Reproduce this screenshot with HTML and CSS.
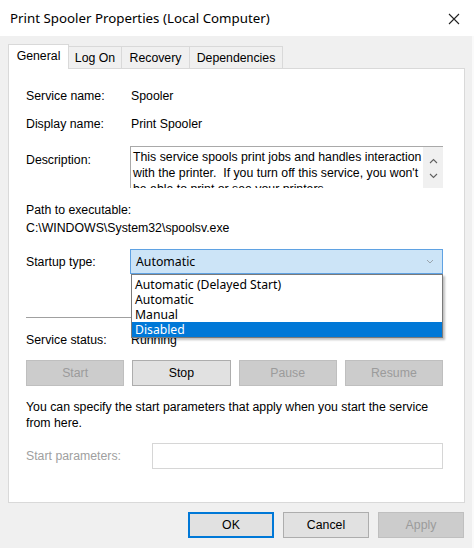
FILE: index.html
```html
<!DOCTYPE html>
<html>
<head>
<meta charset="utf-8">
<link rel="stylesheet" href="styles.css">
</head>
<body>
<div class="window">
  <div class="titlebar">
    <span class="title">Print Spooler Properties (Local Computer)</span>
    <svg class="close" width="12" height="12" viewBox="0 0 12 12"><path d="M1 1L11 11M11 1L1 11" stroke="#222" stroke-width="1.1" fill="none"/></svg>
  </div>
  <div class="body">
    <div class="tabs">
      <div class="tab active">General</div>
      <div class="tab">Log On</div>
      <div class="tab">Recovery</div>
      <div class="tab">Dependencies</div>
    </div>
    <div class="panel">
      <div class="row r1"><span class="label">Service name:</span><span>Spooler</span></div>
      <div class="row r2"><span class="label">Display name:</span><span>Print Spooler</span></div>
      <div class="row desc-row">
        <span class="label desc-label">Description:</span>
        <div class="descbox">
          <div class="desctext">This service spools print jobs and handles interaction with the printer.&nbsp; If you turn off this service, you won't be able to print or see your printers.</div>
          <div class="scroll">
            <svg width="9" height="6" viewBox="0 0 9 6"><path d="M1 5L4.5 1.5L8 5" stroke="#606060" stroke-width="1.1" fill="none"/></svg>
            <svg width="9" height="6" viewBox="0 0 9 6"><path d="M1 1L4.5 4.5L8 1" stroke="#606060" stroke-width="1.1" fill="none"/></svg>
          </div>
        </div>
      </div>
      <div class="path-label">Path to executable:</div>
      <div class="path">C:\WINDOWS\System32\spoolsv.exe</div>
      <div class="row startup-row">
        <span class="label">Startup type:</span>
        <div class="combo-wrap">
          <div class="combo">
            <span>Automatic</span>
            <svg width="8" height="5" viewBox="0 0 8 5"><path d="M1 1L4 4L7 1" stroke="#9aa4ad" stroke-width="1" fill="none"/></svg>
          </div>
          <div class="dropdown">
            <div class="item">Automatic (Delayed Start)</div>
            <div class="item">Automatic</div>
            <div class="item">Manual</div>
            <div class="item selected">Disabled</div>
          </div>
        </div>
      </div>
      <div class="sep"></div>
      <div class="row status-row"><span class="label">Service status:</span><span>Running</span></div>
      <div class="svc-buttons">
        <div class="btn disabled">Start</div>
        <div class="btn">Stop</div>
        <div class="btn disabled">Pause</div>
        <div class="btn disabled">Resume</div>
      </div>
      <p class="note">You can specify the start parameters that apply when you start the service from here.</p>
      <div class="row params-row">
        <span class="label params-label">Start parameters:</span>
        <div class="params-box"></div>
      </div>
    </div>
    <div class="footer">
      <div class="fbtn ok">OK</div>
      <div class="fbtn">Cancel</div>
      <div class="fbtn disabled">Apply</div>
    </div>
  </div>
</div>
</body>
</html>
```

FILE: styles.css
```css
* { box-sizing: border-box; }
html, body { margin: 0; padding: 0; }
body {
  width: 474px;
  height: 548px;
  overflow: hidden;
  background: #f0f0f0;
  font-family: "Liberation Sans", Arial, sans-serif;
  font-size: 12.3px;
  color: #000;
}
.window { width: 474px; height: 548px; display: flex; flex-direction: column; }
.titlebar {
  height: 36px;
  background: #fff;
  display: flex;
  align-items: center;
  justify-content: space-between;
  padding: 0 14px 0 10px;
  flex: none;
}
.title { font-family: "Noto Sans", "Open Sans", sans-serif; font-size: 13.3px; color: #000; }
.close { margin-top: 1px; }
.body {
  flex: 1;
  background: #f0f0f0;
  padding: 8px 8px 0 8px;
  border-right: 2px solid #fafafa;
}
.tabs { display: flex; height: 24px; align-items: flex-end; position: relative; z-index: 2; }
.tab {
  height: 22px;
  display: flex;
  align-items: center;
  justify-content: center;
  white-space: nowrap;
  border: 1px solid #d9d9d9;
  border-bottom: none;
  border-left: none;
  background: #f0f0f0;
  line-height: 16px;
  padding-top: 1px;
}
.tab.active {
  height: 25px;
  margin-bottom: -1px;
  background: #fff;
  border-left: 1px solid #d9d9d9;
  padding: 0 0 3px 0;
  width: 61px;
}
.tab:nth-child(2) { width: 53px; }
.tab:nth-child(3) { width: 68px; }
.tab:nth-child(4) { width: 93px; }
.panel {
  width: 457px;
  background: #fff;
  border: 1px solid #d9d9d9;
  padding: 19px 21px 33px 17px;
  height: 435px;
}
.row { display: flex; align-items: flex-start; line-height: 16px; }
.label { width: 105px; flex: none; }
.r2 { margin-top: 12px; }
.desc-row { margin-top: 14px; }
.desc-label { padding-top: 6px; }
.descbox {
  width: 313px;
  height: 42px;
  border-top: 1px solid #a9a9a9;
  border-left: 1px solid #a9a9a9;
  display: flex;
  overflow: hidden;
  margin-left: -1px;
}
.desctext {
  flex: 1;
  padding: 2px 0 0 2px;
  line-height: 16px;
  height: 42px;
  overflow: hidden;
}
.scroll {
  width: 20px;
  height: 41px;
  background: #f0f0f0;
  display: flex;
  flex-direction: column;
  align-items: center;
  justify-content: space-around;
  padding: 6px 0 5px;
}
.path-label { margin-top: 14px; line-height: 16px; }
.path { margin-top: 2px; line-height: 16px; }
.startup-row { margin-top: 13px; align-items: center; }
.combo-wrap { position: relative; width: 313px; margin-left: -1px; }
.combo {
  height: 25px;
  background: #cce4f7;
  border: 1px solid #5fa2e3;
  display: flex;
  align-items: center;
  justify-content: space-between;
  padding: 0 8px 0 5px;
  font-family: "Noto Sans", sans-serif;
  font-size: 12.3px;
}
.dropdown {
  position: absolute;
  left: 1px;
  top: 25px;
  width: 312px;
  background: #fff;
  border: 1px solid #7a7a7a;
  padding: 2px 0 0 0;
  box-shadow: 2px 2px 2px rgba(0,0,0,0.25);
  font-family: "Noto Sans", sans-serif;
  font-size: 12.2px;
  z-index: 5;
}
.item { height: 15px; line-height: 15px; padding-left: 3px; }
.item.selected { background: #0078d7; color: #fff; }
.sep { height: 1px; background: #a0a0a0; margin-top: 43px; width: 417px; }
.status-row { margin-top: 14px; }
.svc-buttons { display: flex; gap: 8px; margin-top: 12px; width: 417px; }
.btn {
  flex: 1;
  height: 26px;
  background: #e1e1e1;
  border: 1px solid #adadad;
  display: flex;
  align-items: center;
  justify-content: center;
}
.btn.disabled { background: #cccccc; border-color: #bfbfbf; color: #9b9b9b; }
.note { margin: 13px 0 0 0; line-height: 16px; width: 417px; }
.params-row { margin-top: 12px; align-items: center; }
.params-label { color: #a0a0a0; width: 126px; }
.params-box { width: 291px; height: 26px; border: 1px solid #d6d6d6; }
.footer { display: flex; justify-content: flex-end; gap: 9px; margin-top: 9px; }
.fbtn {
  width: 86px;
  height: 26px;
  background: #e1e1e1;
  border: 1px solid #adadad;
  display: flex;
  align-items: center;
  justify-content: center;
}
.fbtn.ok { border: 2px solid #0078d7; }
.fbtn.disabled { background: #cccccc; border-color: #bfbfbf; color: #9b9b9b; }
```
